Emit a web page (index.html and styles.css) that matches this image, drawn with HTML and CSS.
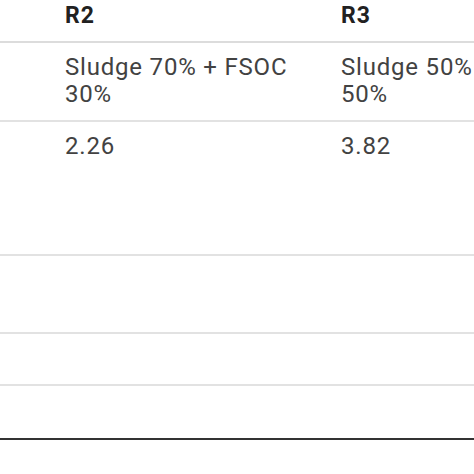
FILE: index.html
```html
<!DOCTYPE html>
<html lang="en">
<head>
<meta charset="utf-8">
<title>Table</title>
<link rel="stylesheet" href="styles.css">
</head>
<body>
<div class="table">
  <div class="row head">
    <div class="cell"></div>
    <div class="cell">R2</div>
    <div class="cell">R3</div>
  </div>
  <div class="row r2">
    <div class="cell"></div>
    <div class="cell">Sludge 70% + FSOC 30%</div>
    <div class="cell">Sludge 50% + FSOC 50%</div>
  </div>
  <div class="row r3">
    <div class="cell"></div>
    <div class="cell">2.26</div>
    <div class="cell">3.82</div>
  </div>
  <div class="row r4">
    <div class="cell"></div>
    <div class="cell"></div>
    <div class="cell"></div>
  </div>
  <div class="row r5">
    <div class="cell"></div>
    <div class="cell"></div>
    <div class="cell"></div>
  </div>
  <div class="row r6 last">
    <div class="cell"></div>
    <div class="cell"></div>
    <div class="cell"></div>
  </div>
</div>
</body>
</html>
```

FILE: styles.css
```css
html, body {
  margin: 0;
  padding: 0;
  background: #ffffff;
  overflow: hidden;
  width: 474px;
  height: 474px;
}

.table {
  width: 601px;
  font-family: Roboto, "Liberation Sans", sans-serif;
  font-size: 24px;
  line-height: 27px;
  letter-spacing: 0.8px;
  color: #424242;
}

.row {
  display: grid;
  grid-template-columns: 49px 276px 276px;
  border-bottom: 2px solid #e2e2e2;
  box-sizing: border-box;
}

.cell {
  padding: 11px 16px 11px 16px;
}

.head {
  height: 43px;
  font-size: 23px;
  font-weight: 700;
  letter-spacing: 1px;
  color: #212121;
  border-bottom-color: #dcdcdc;
}

.head .cell {
  padding-top: 2px;
}

.r2 { height: 79px; }
.r3 { height: 134px; }
.r4 { height: 78px; }
.r5 { height: 52px; }
.r6 { height: 54px; }

.last {
  border-bottom-color: #333333;
}
```
